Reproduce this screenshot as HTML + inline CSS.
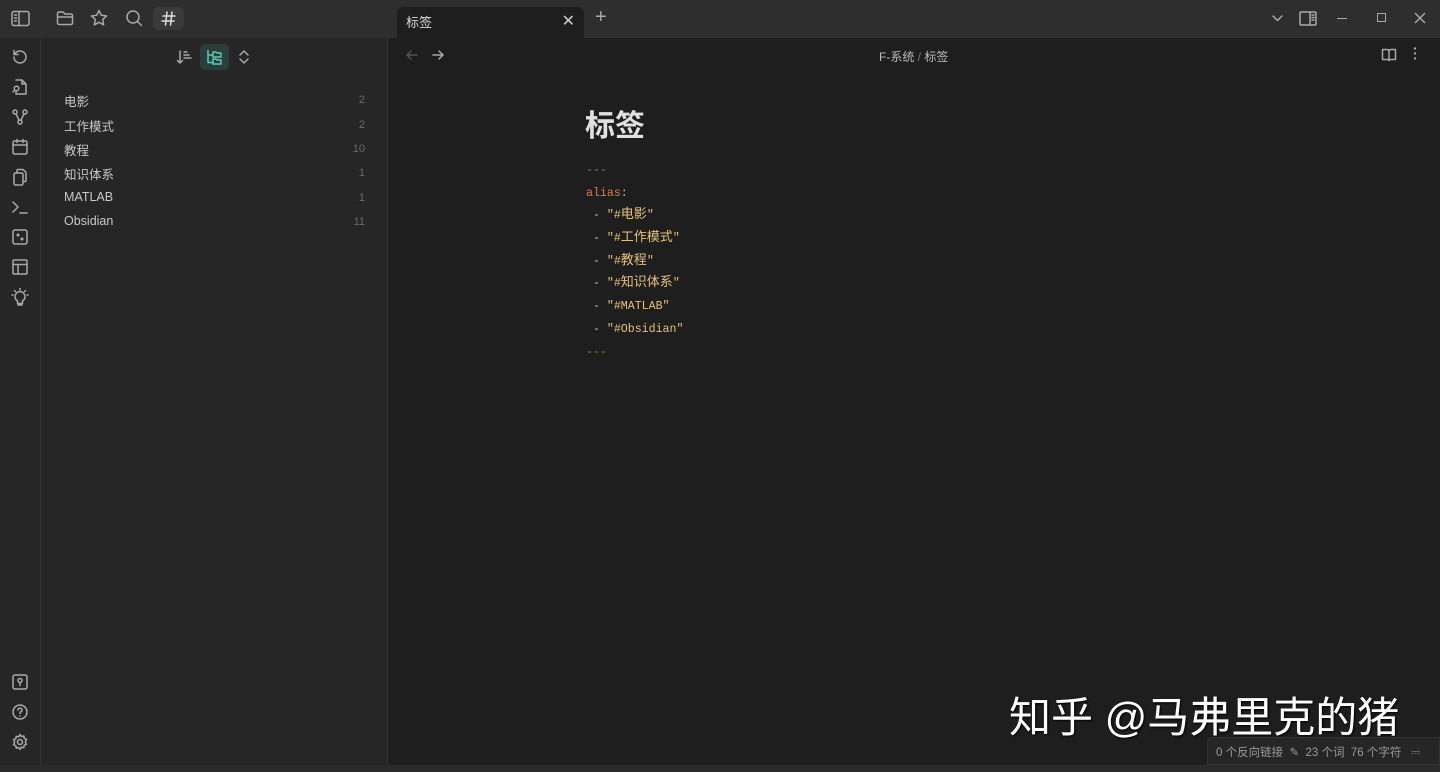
<!DOCTYPE html>
<html><head><meta charset="utf-8"><style>
*{margin:0;padding:0;box-sizing:border-box}
body{width:1440px;height:772px;background:#1e1e1e;font-family:"Liberation Sans","Noto Sans CJK SC",sans-serif;color:#dadada;position:relative;overflow:hidden}
.abs{position:absolute}
svg{fill:none;stroke:#a8a8a8;stroke-width:1.5;stroke-linecap:round;stroke-linejoin:round}
.top{left:0;top:0;width:1440px;height:38px;background:#2e2e2e}
.ribbon{left:0;top:38px;width:41px;height:727px;background:#262626;border-right:1px solid #333}
.side{left:41px;top:38px;width:347px;height:727px;background:#262626;border-right:1px solid #363636}
.tab{left:397px;top:7px;width:187px;height:31px;background:#1e1e1e;border-radius:7px 7px 0 0;font-size:13px;color:#dadada;padding:5px 9px}
.tags div{position:absolute;left:23px;font-size:12.5px;color:#c8c8c8}
.tags span{position:absolute;left:300px;width:24px;text-align:right;font-size:11px;color:#6a6a6a}
.code{left:586px;top:160px;font-family:"Liberation Mono","Noto Sans CJK SC",monospace;font-size:11.6px;color:#e6c07b}
.code div{height:22.7px;line-height:22.7px;white-space:pre}
.code .c{font-size:13px;line-height:1}
.g{color:#6b8e3a}.o{color:#e07b53}.w{color:#bbb}
</style></head><body>
<div class="abs top"></div>
<div class="abs ribbon"></div>
<div class="abs side"></div>
<div class="abs tab">标签<span style="position:absolute;right:9px;top:4px;font-size:16px;color:#ccc">✕</span></div>
<div class="abs" style="left:595px;top:6px;font-size:20px;color:#aaa">+</div>
<svg class="abs" style="left:11px;top:10px" width="19" height="17" viewBox="0 0 19 17"><rect x="1" y="1.5" width="17" height="14" rx="2"/><path d="M8 1.5v14M3.5 5h2M3.5 8h2M3.5 11h2"/></svg>
<svg class="abs" style="left:56px;top:10px" width="18" height="16" viewBox="0 0 18 16"><path d="M1.5 3.5a1.5 1.5 0 0 1 1.5-1.5h4l2 2h6a1.5 1.5 0 0 1 1.5 1.5v7.5a1.5 1.5 0 0 1-1.5 1.5H3a1.5 1.5 0 0 1-1.5-1.5zM1.5 7h15"/></svg>
<svg class="abs" style="left:90px;top:9px" width="18" height="18" viewBox="0 0 18 18"><path d="M9 1.5l2.3 4.8 5.2.7-3.8 3.6.9 5.2L9 13.3l-4.6 2.5.9-5.2L1.5 7l5.2-.7z"/></svg>
<svg class="abs" style="left:125px;top:9px" width="18" height="18" viewBox="0 0 18 18"><circle cx="8" cy="8" r="6"/><path d="M12.5 12.5l4 4"/></svg>
<div class="abs" style="left:153px;top:7px;width:31px;height:23px;background:#3a3a3a;border-radius:5px"></div>
<svg class="abs" style="left:160px;top:10px" width="17" height="17" viewBox="0 0 17 17"><path d="M3 6h12M2 11h12M7 2L5.5 15M12 2l-1.5 13" stroke="#ddd"/></svg>
<svg class="abs" style="left:1271px;top:13px" width="13" height="10" viewBox="0 0 13 10"><path d="M2 3l4.5 4.5L11 3"/></svg>
<svg class="abs" style="left:1299px;top:11px" width="18" height="15" viewBox="0 0 18 15"><rect x="1" y="1" width="16" height="13" rx="1"/><path d="M11 1v13M13 4h2M13 6.5h2M13 9h2"/></svg>
<div class="abs" style="left:1337px;top:18px;width:10px;height:1.3px;background:#aaa"></div>
<div class="abs" style="left:1377px;top:13px;width:9px;height:9px;border:1.3px solid #aaa"></div>
<svg class="abs" style="left:1414px;top:12px" width="12" height="12" viewBox="0 0 12 12"><path d="M1.5 1.5l9 9M10.5 1.5l-9 9"/></svg>
<svg class="abs" style="left:11px;top:48px" width="18" height="18" viewBox="0 0 18 18"><path d="M3 9a6 6 0 1 0 2-4.5L3 6.5M3 2.5v4h4"/></svg>
<svg class="abs" style="left:11px;top:78px" width="18" height="18" viewBox="0 0 18 18"><path d="M5 2h6l4 4v10H5v-2M11 2v4h4"/><circle cx="5.5" cy="10.5" r="2.3"/><path d="M3.8 12.2l-1.8 1.8"/></svg>
<svg class="abs" style="left:11px;top:108px" width="18" height="18" viewBox="0 0 18 18"><circle cx="4" cy="4" r="2"/><circle cx="14" cy="4" r="2"/><circle cx="9" cy="14" r="2"/><path d="M5 5.7l3 6.5M13 5.7l-3 6.5"/></svg>
<svg class="abs" style="left:11px;top:138px" width="18" height="18" viewBox="0 0 18 18"><rect x="2" y="3" width="14" height="13" rx="1.5"/><path d="M2 7h14M6 1.5v3M12 1.5v3"/></svg>
<svg class="abs" style="left:11px;top:168px" width="18" height="18" viewBox="0 0 18 18"><rect x="3" y="5" width="9" height="12" rx="1.5"/><path d="M6 5V2.5A1 1 0 0 1 7 1.5h5l3 3v8a1 1 0 0 1-1 1h-2"/></svg>
<svg class="abs" style="left:11px;top:198px" width="18" height="18" viewBox="0 0 18 18"><path d="M2 4l5 5-5 5M9 15h7"/></svg>
<svg class="abs" style="left:11px;top:228px" width="18" height="18" viewBox="0 0 18 18"><rect x="2" y="2" width="14" height="14" rx="2"/><circle cx="7" cy="7" r=".8"/><circle cx="11" cy="11" r=".8"/></svg>
<svg class="abs" style="left:11px;top:258px" width="18" height="18" viewBox="0 0 18 18"><rect x="2" y="2" width="14" height="14" rx="1"/><path d="M2 6.5h14M7 6.5V16"/></svg>
<svg class="abs" style="left:11px;top:288px" width="18" height="18" viewBox="0 0 18 18"><path d="M6.5 13a5 5 0 1 1 5 0v2.5h-5zM7 17h4M9 0.5v1.5M2 7H1M17 7h-1M3.5 2.5l1 1M14.5 2.5l-1 1"/></svg>
<svg class="abs" style="left:11px;top:673px" width="18" height="18" viewBox="0 0 18 18"><rect x="2" y="2" width="14" height="14" rx="2"/><circle cx="9" cy="7.5" r="2"/><path d="M9 9.5v3"/></svg>
<svg class="abs" style="left:11px;top:703px" width="18" height="18" viewBox="0 0 18 18"><circle cx="9" cy="9" r="7"/><path d="M7 7a2 2 0 1 1 2.5 2c-.5.2-.5.6-.5 1.5M9 13v.1"/></svg>
<svg class="abs" style="left:11px;top:733px" width="18" height="18" viewBox="0 0 18 18"><circle cx="9" cy="9" r="2.5"/><path d="M9 1.5l1.4 2 2.4-.6.4 2.4 2.3 1L14.3 9l1.2 2.3-2.3 1-.4 2.4-2.4-.6L9 16.5l-1.4-2-2.4.6-.4-2.4-2.3-1L3.7 9 2.5 6.7l2.3-1 .4-2.4 2.4.6z"/></svg>
<svg class="abs" style="left:176px;top:49px" width="16" height="16" viewBox="0 0 16 16"><path d="M4 2v12M1.5 11.5L4 14l2.5-2.5M8 3h3M8 6h5M8 9h7"/></svg>
<div class="abs" style="left:200px;top:44px;width:29px;height:26px;background:#2c3e3b;border-radius:5px"></div>
<svg class="abs" style="left:206px;top:49px" width="17" height="17" viewBox="0 0 17 17"><path stroke="#5fc9b4" d="M2 1.5v12h4M2 6h4M7 3h3l1 1h4v4H7zM7 10h3l1 1h4v4H7z"/></svg>
<svg class="abs" style="left:237px;top:49px" width="14" height="16" viewBox="0 0 14 16"><path d="M3 6l4-4 4 4M3 10l4 4 4-4"/></svg>
<div class="abs tags" style="left:41px;top:91px;width:347px">
<div style="top:0">电影</div><span style="top:3px">2</span>
<div style="top:25px">工作模式</div><span style="top:28px">2</span>
<div style="top:49px">教程</div><span style="top:52px">10</span>
<div style="top:73px">知识体系</div><span style="top:76px">1</span>
<div style="top:99px">MATLAB</div><span style="top:101px">1</span>
<div style="top:123px">Obsidian</div><span style="top:125px">11</span>
</div>
<svg class="abs" style="left:405px;top:48px" width="14" height="14" viewBox="0 0 14 14"><path stroke="#555" d="M12 7H2M6 3L2 7l4 4"/></svg>
<svg class="abs" style="left:431px;top:48px" width="14" height="14" viewBox="0 0 14 14"><path d="M2 7h10M8 3l4 4-4 4"/></svg>
<div class="abs" style="left:879px;top:48px;font-size:12px;color:#bbb">F-系统 <span style="color:#777">/</span> 标签</div>
<svg class="abs" style="left:1381px;top:47px" width="16" height="15" viewBox="0 0 16 15"><path d="M8 3v10M1.5 2.5h4.5A2 2 0 0 1 8 4a2 2 0 0 1 2-1.5h4.5v10H10a2 2 0 0 0-2 1 2 2 0 0 0-2-1H1.5z"/></svg>
<div class="abs" style="left:1413px;top:46px;width:3px;font-size:14px;line-height:5px;color:#aaa;font-weight:bold">·<br>·<br>·</div>
<div class="abs" style="left:585px;top:101px;font-size:30px;font-weight:bold;color:#e0e0e0">标签</div>
<div class="abs code"><div class="g">---</div><div><span class="o">alias</span><span class="w">:</span></div><div><span class="w"> - </span>"#<span class="c">电影</span>"</div><div><span class="w"> - </span>"#<span class="c">工作模式</span>"</div><div><span class="w"> - </span>"#<span class="c">教程</span>"</div><div><span class="w"> - </span>"#<span class="c">知识体系</span>"</div><div><span class="w"> - </span>"#MATLAB"</div><div><span class="w"> - </span>"#Obsidian"</div><div class="g">---</div></div>
<div class="abs" style="left:1009px;top:684px;font-size:42px;color:#fff;text-shadow:1px 1px 2px #000">知乎 @马弗里克的猪</div>
<div class="abs" style="left:1207px;top:737px;width:233px;height:28px;background:#262626;border:1px solid #333;border-radius:6px 0 0 0;font-size:11.5px;color:#999;padding:6px 8px;white-space:nowrap">0 个反向链接 &nbsp;✎&nbsp; 23 个词 &nbsp;76 个字符 &nbsp; ⎓</div>
<div class="abs" style="left:0;top:765px;width:1440px;height:7px;background:#2a2a2a"></div>
</body></html>
